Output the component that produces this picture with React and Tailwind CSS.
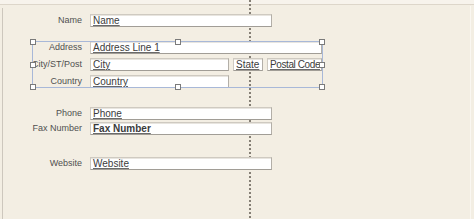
const Field = ({ w, children, bold, tight }) => (
    <div
        className={`h-[13px] bg-white border border-[#cfcac1] border-b-[#a19d96] border-r-[#b3afa8] shadow-[inset_0_1px_0_#e8e5df] pl-[2px] text-[10px] leading-[12px] text-[#3b3b3b] underline decoration-[#6a6a6a] underline-offset-1 whitespace-nowrap overflow-hidden ${bold ? 'font-bold' : ''} ${tight ? 'tracking-[-0.4px]' : ''}`}
        style={{ width: w }}
    >
        {children}
    </div>
);

const Label = ({ children }) => (
    <div className="w-[82px] text-right text-[9px] leading-[13px] text-[#505050] whitespace-nowrap">
        {children}
    </div>
);

const Handle = ({ className }) => (
    <div className={`absolute w-[6px] h-[6px] bg-white border border-[#7a7a7a] ${className}`}></div>
);

const App = () => {
    return (
        <div className="relative w-[474px] h-[219px] bg-[#f3eee3] overflow-hidden font-['Liberation_Sans',Arial,sans-serif]">
            <div className="h-[5px] bg-[#f7f3ec] border-b border-[#ddd6ca]"></div>

            {/* page edges */}
            <div className="absolute left-[2px] top-[8px] bottom-0 w-px bg-[#cdc7bd]"></div>
            <div className="absolute right-[3px] top-[6px] bottom-0 w-px bg-[#faf7f1]"></div>

            {/* dotted guide */}
            <div className="absolute left-[249px] top-0 bottom-0 w-[2px] bg-[linear-gradient(to_bottom,#857f75_50%,transparent_50%)] bg-[length:2px_4px]"></div>

            <div className="relative pt-[9px] flex flex-col">
                <div className="flex items-center gap-[8px]">
                    <Label>Name</Label>
                    <Field w="182px">Name</Field>
                </div>

                <div className="relative mt-[14px] flex flex-col gap-[4px]">
                    <div className="flex items-center gap-[8px]">
                        <Label>Address</Label>
                        <Field w="232px">Address Line 1</Field>
                    </div>
                    <div className="flex items-center gap-[8px]">
                        <Label>City/ST/Post</Label>
                        <div className="flex gap-[4px]">
                            <Field w="139px">City</Field>
                            <Field w="30px">State</Field>
                            <Field w="55px" tight>Postal Code</Field>
                        </div>
                    </div>
                    <div className="flex items-center gap-[8px]">
                        <Label>Country</Label>
                        <Field w="139px">Country</Field>
                    </div>

                    {/* selection */}
                    <div className="absolute left-[32px] top-0 w-[291px] bottom-0 border border-[#a8b8d8]">
                        <Handle className="-left-[3px] -top-[3px]" />
                        <Handle className="left-[142px] -top-[3px]" />
                        <Handle className="-right-[3px] -top-[3px]" />
                        <Handle className="-left-[3px] top-[20px]" />
                        <Handle className="-right-[3px] top-[20px]" />
                        <Handle className="-left-[3px] -bottom-[3px]" />
                        <Handle className="left-[142px] -bottom-[3px]" />
                        <Handle className="-right-[3px] -bottom-[3px]" />
                    </div>
                </div>

                <div className="mt-[19px] flex flex-col gap-[2px]">
                    <div className="flex items-center gap-[8px]">
                        <Label>Phone</Label>
                        <Field w="182px">Phone</Field>
                    </div>
                    <div className="flex items-center gap-[8px]">
                        <Label>Fax Number</Label>
                        <Field w="182px" bold>Fax Number</Field>
                    </div>
                </div>

                <div className="mt-[22px] flex items-center gap-[8px]">
                    <Label>Website</Label>
                    <Field w="182px">Website</Field>
                </div>
            </div>
        </div>
    );
};

export default App;
